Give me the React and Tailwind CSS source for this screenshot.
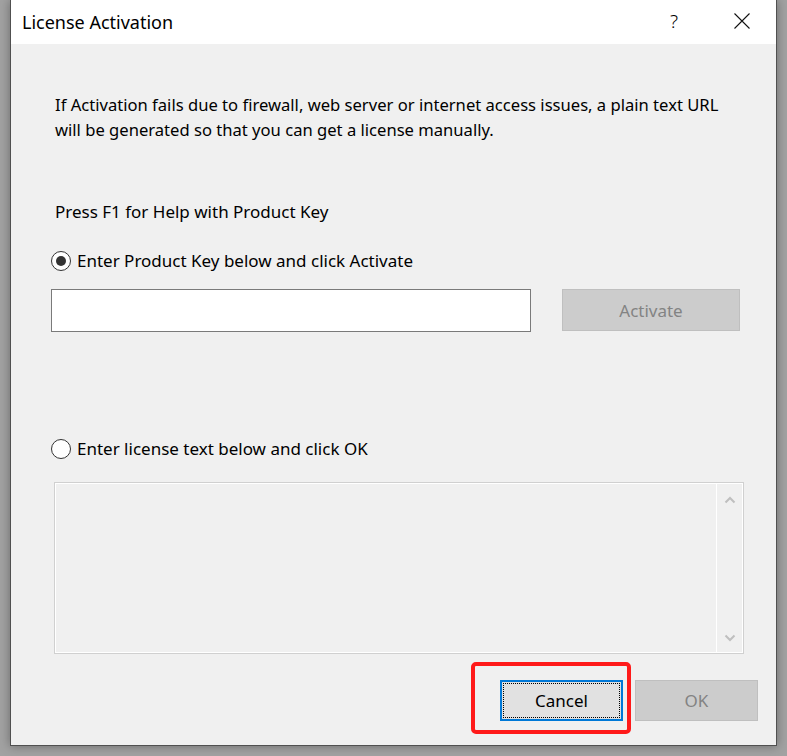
import React from "react";

const font = { fontFamily: '"Noto Sans", "Open Sans", sans-serif' };

const Radio = ({ checked }) => (
  <span className="w-[20px] h-[20px] rounded-full border border-[#333333] bg-white flex items-center justify-center shrink-0">
    {checked && <span className="w-[10px] h-[10px] rounded-full bg-[#333333]" />}
  </span>
);

const Chevron = ({ up }) => (
  <svg width="12" height="8" viewBox="0 0 12 8" className="block">
    <path
      d={up ? "M1.5 6.5 L6 2 L10.5 6.5" : "M1.5 1.5 L6 6 L10.5 1.5"}
      fill="none"
      stroke="#bfbfbf"
      strokeWidth="2"
    />
  </svg>
);

export default function App() {
  return (
    <div
      className="w-[787px] h-[756px] bg-[#a2a2a2] pl-[10px] overflow-hidden text-black"
      style={font}
    >
      <div className="relative w-[767px] h-[746px] border-x border-b border-[#505050] bg-[#f0f0f0] shadow-[0_0_10px_rgba(0,0,0,0.35)] flex flex-col">
        {/* TITLE BAR */}
        <div className="h-[44px] bg-white flex items-center shrink-0">
          <span className="ml-[11px] text-[18px] leading-none -mt-[1px]">License Activation</span>
          <span className="ml-auto mr-[56px] text-[19px] font-light leading-none -mt-[1px]">?</span>
          <svg width="16" height="16" viewBox="0 0 16 16" className="mr-[26px] -mt-[2px]">
            <path d="M0.5 0.5 L15.5 15.5 M15.5 0.5 L0.5 15.5" stroke="#111" strokeWidth="1.1" fill="none" />
          </svg>
        </div>

        {/* BODY */}
        <div className="flex flex-col pl-[40px] text-[17px] leading-[25px]">
          <p className="mt-[48px] ml-[4px] text-[16.6px]">
            If Activation fails due to firewall, web server or internet access issues, a plain text URL
            <br />
            will be generated so that you can get a license manually.
          </p>

          <p className="mt-[57px] ml-[4px]">Press F1 for Help with Product Key</p>

          <label className="mt-[24px] flex items-center gap-[6px]">
            <Radio checked />
            <span>Enter Product Key below and click Activate</span>
          </label>

          <div className="mt-[16px] flex items-start">
            <div className="w-[480px] h-[43px] bg-white border border-[#7a7a7a]" />
            <button className="ml-[31px] w-[178px] h-[42px] bg-[#cccccc] border border-[#bfbfbf] text-[#838383] text-[17px]">
              Activate
            </button>
          </div>

          <label className="mt-[104px] flex items-center gap-[6px]">
            <Radio />
            <span>Enter license text below and click OK</span>
          </label>

          <div className="mt-[21px] ml-[3px] w-[690px] h-[172px] border border-[#d0d0d0] flex">
            <div className="flex-1 border border-white border-r-0" />
            <div className="w-[27px] border border-white flex flex-col items-center justify-between pt-[12px] pb-[10px]">
              <Chevron up />
              <Chevron />
            </div>
          </div>

          <div className="mt-[26px] flex justify-end pr-[18px] gap-[12px]">
            <button className="w-[123px] h-[41px] bg-[#e1e1e1] border-2 border-[#0078d7] p-[1px]">
              <span className="w-full h-full border border-dotted border-black flex items-center justify-center">
                Cancel
              </span>
            </button>
            <button className="w-[123px] h-[41px] bg-[#cccccc] border border-[#bfbfbf] text-[#838383]">
              OK
            </button>
          </div>
        </div>

        {/* HIGHLIGHT */}
        <div className="absolute left-[460px] top-[662px] w-[160px] h-[72px] border-4 border-[#ff1a1a] rounded-[5px] pointer-events-none" />
      </div>
    </div>
  );
}
